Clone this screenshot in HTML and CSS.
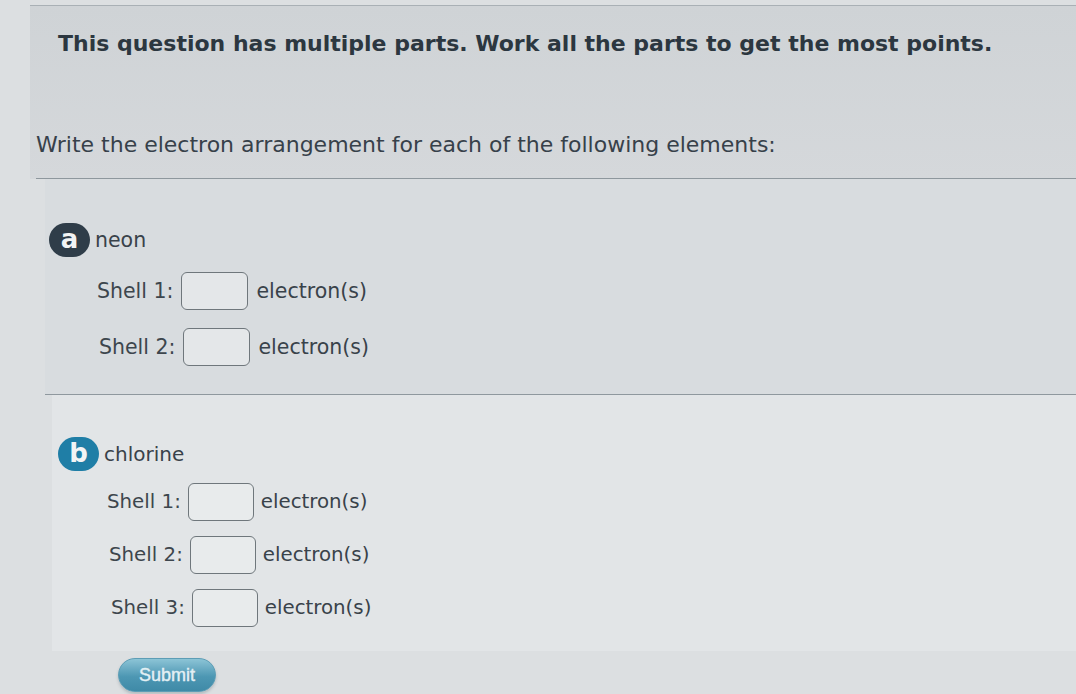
FILE: index.html
```html
<!DOCTYPE html>
<html>
<head>
<meta charset="utf-8">
<link rel="stylesheet" href="styles.css">
</head>
<body>
<div class="page">
  <div class="top">
    <p class="lead">This question has multiple parts. Work all the parts to get the most points.</p>
    <p class="prompt">Write the electron arrangement for each of the following elements:</p>
  </div>

  <div class="part part-a">
    <div class="part-title"><span class="badge badge-dark">a</span><span>neon</span></div>
    <div class="row"><span class="label">Shell 1:</span><input class="box" type="text"><span>electron(s)</span></div>
    <div class="row"><span class="label">Shell 2:</span><input class="box" type="text"><span>electron(s)</span></div>
  </div>

  <div class="part part-b">
    <div class="part-title"><span class="badge badge-blue">b</span><span>chlorine</span></div>
    <div class="row"><span class="label">Shell 1:</span><input class="box" type="text"><span>electron(s)</span></div>
    <div class="row"><span class="label">Shell 2:</span><input class="box" type="text"><span>electron(s)</span></div>
    <div class="row"><span class="label">Shell 3:</span><input class="box" type="text"><span>electron(s)</span></div>
  </div>

  <div class="actions"><button class="submit" type="button">Submit</button></div>
</div>
</body>
</html>
```

FILE: styles.css
```css
html, body {
  margin: 0;
  padding: 0;
}
body {
  background: #dcdfe1;
  font-family: "DejaVu Sans", Verdana, sans-serif;
  color: #39424a;
  width: 1076px;
  height: 694px;
  overflow: hidden;
}
.page {
  padding-top: 5px;
}
.top {
  margin-left: 30px;
  border-top: 1px solid #a9b0b5;
  background: linear-gradient(#cfd3d6, #d5d8db);
  padding-top: 25px;
}
.lead {
  margin: 0 0 0 28px;
  font-weight: bold;
  font-size: 22px;
  line-height: 26px;
  color: #2c3740;
}
.prompt {
  margin: 75px 0 0 6px;
  font-size: 22px;
  line-height: 26px;
  padding-bottom: 20px;
  border-bottom: 1px solid #8e979d;
  color: #37414a;
}
.part {
  display: flex;
  flex-direction: column;
}
.part-a {
  margin-left: 45px;
  background: #d8dcdf;
  padding: 44px 0 28px 4px;
  border-bottom: 1px solid #8f989e;
  gap: 18px;
}
.part-b {
  margin-left: 52px;
  background: #e2e5e7;
  padding: 42px 0 24px 6px;
  gap: 15px;
}
.part-title {
  display: flex;
  align-items: center;
  gap: 5px;
  font-size: 20.5px;
  line-height: 24px;
  margin-bottom: -3px;
}
.part-b .part-title {
  font-size: 20px;
}
.badge {
  display: inline-flex;
  align-items: center;
  justify-content: center;
  width: 41px;
  height: 34px;
  border-radius: 17px;
  color: #f2f4f5;
  font-weight: bold;
  font-size: 26px;
  line-height: 1;
  padding-bottom: 3px;
  box-sizing: border-box;
}
.badge-dark {
  background: #2f3d49;
}
.badge-blue {
  background: #1f7ea6;
}
.row {
  display: flex;
  align-items: center;
  gap: 8px;
  font-size: 20.5px;
  line-height: 24px;
  padding-left: 48px;
}
.part-b .row {
  padding-left: 49px;
  font-size: 19.8px;
  gap: 7px;
}
.part-a .row + .row {
  padding-left: 50px;
}
.part-b .row + .row {
  padding-left: 51px;
}
.part-b .row + .row + .row {
  padding-left: 53px;
}
.label {
  color: #3d464d;
}
.box {
  width: 67px;
  height: 38px;
  box-sizing: border-box;
  border: 1.5px solid #6f777c;
  border-radius: 6px;
  background: #e4e7e9;
  margin: 0;
  padding: 0;
}
.part-b .box {
  background: #e8ebec;
  width: 66px;
}
.actions {
  padding: 7px 0 0 118px;
}
.submit {
  width: 98px;
  height: 34px;
  border-radius: 17px;
  border: 1px solid #5d9db5;
  background: linear-gradient(#8cc4d6, #4d97b3 55%, #3f8aa7);
  color: #e3f0f4;
  font-family: "Liberation Sans", Arial, sans-serif;
  font-size: 18px;
  font-weight: normal;
  -webkit-text-stroke: 0.4px #e3f0f4;
  padding: 0;
  box-shadow: 0 2px 3px rgba(60, 80, 90, 0.25);
}
```
